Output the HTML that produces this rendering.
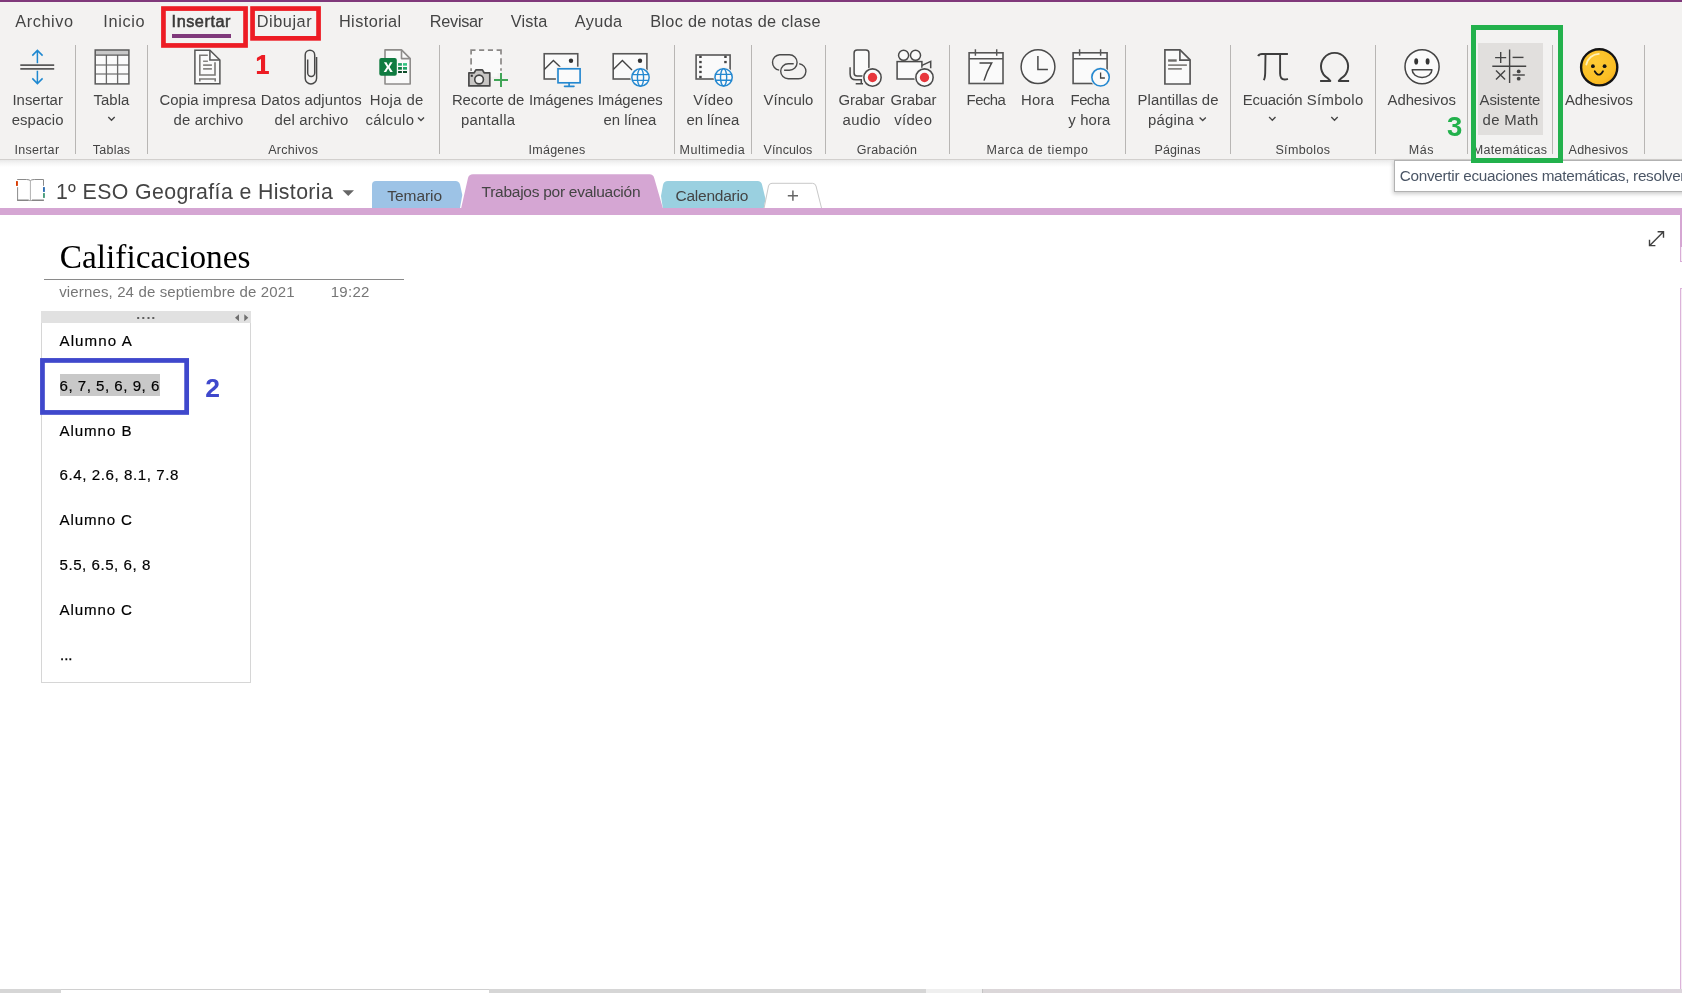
<!DOCTYPE html>
<html lang="es"><head><meta charset="utf-8"><title>OneNote</title>
<style>
html,body{margin:0;padding:0;}
body{width:1682px;height:993px;overflow:hidden;background:#fff;position:relative;font-family:"Liberation Sans",sans-serif;}
.a{position:absolute;}
.t{position:absolute;white-space:pre;}
.sep{position:absolute;top:45px;height:109px;width:1px;background:#b8b6b4;}
#ribbon{left:0;top:0;width:1682px;height:159px;background:#f3f2f1;border-bottom:1px solid #d2d0ce;}
#shadow{left:0;top:160px;width:1682px;height:7px;background:linear-gradient(#e9e9e9,#f6f6f6 50%,#ffffff);}
#topbar{left:0;top:0;width:1682px;height:2px;background:#80397b;}
</style></head><body>
<div class="a" id="ribbon"></div>
<div class="a" id="shadow"></div>
<div class="a" id="topbar"></div>

<!-- highlighted button -->
<div class="a" style="left:1478px;top:43px;width:65px;height:92px;background:#e1dfdd;"></div>

<!-- separators -->
<div class="sep" style="left:75px"></div><div class="sep" style="left:147px"></div>
<div class="sep" style="left:439px"></div><div class="sep" style="left:674px"></div>
<div class="sep" style="left:751px"></div><div class="sep" style="left:825px"></div>
<div class="sep" style="left:949px"></div><div class="sep" style="left:1125px"></div>
<div class="sep" style="left:1230px"></div><div class="sep" style="left:1375px"></div>
<div class="sep" style="left:1467px"></div><div class="sep" style="left:1552px"></div>
<div class="sep" style="left:1644px"></div>

<!-- active tab underline -->
<div class="a" style="left:172px;top:34px;width:59px;height:4px;background:#80397b;"></div>

<!-- notebook row / section tabs / pink bar -->
<svg class="a" style="left:0;top:165px" width="1682" height="60" viewBox="0 165 1682 60">
  <!-- Temario -->
  <path d="M372 208 V185 Q372 181 376 181 H455.5 Q459 181 460 184.5 L462.3 195 L460 208 Z" fill="#9dc3e6"/>
  <!-- Calendario -->
  <path d="M662.8 208 L661 196 L663 185 Q663.8 181 668 181 H757.5 Q761.2 181 762 184.5 L765.5 199 L763.8 208 Z" fill="#9ad0e0"/>
  <!-- Trabajos -->
  <path d="M461.2 208 L468 178 Q469 174.3 473 174.3 H649.5 Q653.2 174.3 654.2 178 L662.8 208 Z" fill="#d5a6d3"/>
  <!-- plus tab -->
  <path d="M764.1 208 L768.5 186 Q769.1 183.3 772 183.3 H812.5 Q815.2 183.3 816 186 L821.5 208" fill="#fff" stroke="#c8c8c8" stroke-width="1"/>
  <path d="M787.8 195.7 H798 M792.9 190.6 V200.8" stroke="#666" stroke-width="1.5" fill="none"/>
  <!-- pink bar -->
  <rect x="0" y="208" width="1682" height="7" fill="#d5a6d3"/>
  <!-- right strip -->
  <!-- dropdown triangle -->
  <path d="M342.5 190.2 H354 L348.25 196 Z" fill="#666"/>
  <!-- notebook icon -->
  <g fill="none" stroke="#8a8a8a" stroke-width="1">
    <path d="M17.2 179.5 H26.5 Q29.6 179.6 30.4 180.7 Q31.2 179.6 34.3 179.5 H43.5 V185.8"/>
    <path d="M17.6 187.2 V200"/>
    <path d="M30.4 180.7 V200" stroke="#b0b0b0"/>
  </g>
  <path d="M17.1 200.3 H28.8 M32 200.3 H43.9" stroke="#858585" stroke-width="1.6" fill="none"/><path d="M28.8 200.5 H32" stroke="#a8a8a8" stroke-width="1.1" fill="none"/>
  <rect x="16" y="181.1" width="1.9" height="4.8" fill="#d83b01"/>
  <rect x="43" y="187.1" width="1.9" height="4.8" fill="#2e6db4"/>
  <rect x="43" y="193.1" width="1.9" height="4.8" fill="#4a9c7a"/>
</svg>

<!-- right edge elements -->
<div class="a" style="left:1680px;top:215px;width:2px;height:32px;background:#d5a6d3;"></div>
<div class="a" style="left:1680px;top:247px;width:2px;height:15px;background:#f6ecf5;border-left:1px solid #d9acd7;border-bottom:1px solid #d9acd7;box-sizing:border-box;"></div>
<div class="a" style="left:1680px;top:288px;width:2px;height:701px;background:#f6ecf5;border-left:1px solid #dcb3da;border-top:1px solid #dcb3da;box-sizing:border-box;"></div>
<!-- expand arrow -->
<svg class="a" style="left:1645px;top:227px" width="24" height="24" viewBox="1645 227 24 24">
  <path d="M1649.8 245.5 L1663.2 232.1 M1657.6 231.8 H1663.5 V237.8 M1649.5 239.8 V245.6 H1655.4" fill="none" stroke="#404040" stroke-width="1.4"/>
</svg>

<!-- page: title underline -->
<div class="a" style="left:44px;top:279px;width:360px;height:1px;background:#8a8a8a;"></div>
<!-- container -->
<div class="a" style="left:41px;top:311px;width:210px;height:372px;box-sizing:border-box;border:1px solid #d6d6d6;"></div>
<div class="a" style="left:41px;top:311px;width:210px;height:12px;background:#e1e1e1;"></div>
<svg class="a" style="left:130px;top:311px" width="125" height="12" viewBox="130 311 125 12">
  <g fill="#5e5e5e"><rect x="137.2" y="317" width="2" height="2"/><rect x="142.3" y="317" width="2" height="2"/><rect x="147.5" y="317" width="2" height="2"/><rect x="152.3" y="317" width="2" height="2"/></g>
  <path d="M239 314.2 V321.2 L235 317.7 Z M244.3 314.2 V321.2 L248.3 317.7 Z" fill="#6e6e6e"/>
</svg>
<!-- selection highlight -->
<div class="a" style="left:60px;top:374px;width:100px;height:22px;background:#c8c8c8;"></div>

<!-- tooltip -->
<div class="a" style="left:1394px;top:160px;width:300px;height:32px;box-sizing:border-box;border:1px solid #b2b2b2;background:#fff;box-shadow:-1px 2px 4px rgba(0,0,0,0.2);"></div>
<!-- ICONS -->
<svg class="a" style="left:0;top:40px" width="1682" height="90" viewBox="0 40 1682 90">
<defs>
  <radialGradient id="yg" cx="0.4" cy="0.35" r="0.75">
    <stop offset="0" stop-color="#fdca35"/><stop offset="0.7" stop-color="#fbbf24"/><stop offset="1" stop-color="#f5a91a"/>
  </radialGradient>
</defs>

<!-- Insertar espacio -->
<g fill="none" stroke="#1e88d0" stroke-width="1.5">
  <path d="M37.4 63.3 V50.3 M32.3 55.6 L37.4 50.4 L42.6 55.6"/>
  <path d="M37.4 70.7 V83.8 M32.3 78.4 L37.4 83.6 L42.6 78.4"/>
</g>
<path d="M20.3 65.1 H54.2 M20.3 68.9 H54.2" stroke="#5a5a5a" stroke-width="1.6" fill="none"/>

<!-- Tabla -->
<g>
  <rect x="95.2" y="50" width="33.7" height="33.9" fill="#fbfbfb"/>
  <rect x="95.2" y="50" width="33.7" height="5" fill="#c8c8c8"/>
  <path d="M95.2 65 H128.9 M95.2 74 H128.9" stroke="#8a8a8a" stroke-width="1.3" fill="none"/>
  <path d="M106.4 55 V83.9 M117.6 55 V83.9" stroke="#6a6a6a" stroke-width="1.3" fill="none"/>
  <path d="M95.2 55.1 H128.9" stroke="#5a5a5a" stroke-width="1.4" fill="none"/>
  <rect x="95.2" y="50" width="33.7" height="33.9" fill="none" stroke="#5a5a5a" stroke-width="1.5"/>
</g>

<!-- Copia impresa -->
<g fill="none" stroke="#555" stroke-width="1.5">
  <path d="M194.9 50.3 H209.9 L219.9 60 V83.8 H194.9 Z" fill="#fafafa"/>
  <path d="M209.9 50.3 V60 H219.9"/>
  <path d="M207.8 55.2 H199.8 V75 H215 V62.2" stroke="#7a7876" stroke-width="1.6"/>
  <path d="M203.1 61.3 H207.9 M203.1 65.1 H211.9 M203.1 68.9 H211.9" stroke="#878583" stroke-width="1.6"/>
  <path d="M199.8 81.5 V79 H215.2 V81.5" stroke="#7a7876" stroke-width="1.6"/>
</g>

<!-- Paperclip -->
<path d="M316.6 57 V78.3 A5.7 5.7 0 0 1 305.2 78.3 V54.9 A4.75 4.75 0 0 1 314.7 54.9 V72.9 A3.5 3.5 0 0 1 307.7 72.9 V59.4" fill="none" stroke="#484848" stroke-width="1.45"/>

<!-- Excel -->
<g>
  <path d="M385 49.9 H401.5 L410.2 58.6 V84 H385 Z" fill="#fafafa" stroke="#8e8c8a" stroke-width="1.6" stroke-linejoin="round"/>
  <path d="M401.5 49.9 V58.6 H410.2" fill="none" stroke="#8e8c8a" stroke-width="1.6" stroke-linejoin="round"/>
  <rect x="398.1" y="63.1" width="3.8" height="2.6" fill="#21a366"/><rect x="403" y="63.1" width="4" height="2.6" fill="#33c481"/>
  <rect x="398.1" y="67" width="3.8" height="2.7" fill="#107c41"/><rect x="403" y="67" width="4" height="2.7" fill="#21a366"/>
  <rect x="398.1" y="71" width="3.8" height="2" fill="#0b4a28"/><rect x="403" y="71" width="4" height="2" fill="#0e4f2b"/>
  <rect x="379.3" y="58" width="17.5" height="17.7" rx="2" fill="#107c41"/>
  <path d="M383.9 62.3 H386.5 L388.3 65.7 L390.1 62.3 H392.6 L389.6 67.1 L392.8 71.9 H390.2 L388.2 68.4 L386.2 71.9 H383.7 L386.9 67.1 Z" fill="#fff"/>
</g>

<!-- Recorte de pantalla -->
<g>
  <path d="M471.1 50.1 H501 V73 H497.5 V76.7 H471.1 Z" fill="#fafafa"/>
  <path d="M471.1 54.4 V50.1 H475.5 M479.1 50.1 H484.2 M487.9 50.1 H493 M496.6 50.1 H501 V54.4 M471.1 58.2 V64.4 M471.1 68.2 V71 M501 58.2 V64.4 M501 68.2 V70.8" fill="none" stroke="#8a8886" stroke-width="1.7"/>
  <path d="M468.9 72.8 H474.2 L475.9 69.9 H482.4 L484.1 72.8 H489.8 V85.9 H468.9 Z" fill="#c8c6c4" stroke="#484848" stroke-width="1.7" stroke-linejoin="round"/>
  <circle cx="479.1" cy="79.5" r="4.35" fill="#f3f2f1" stroke="#444" stroke-width="1.6"/>
  <rect x="470.7" y="74.7" width="2.1" height="2.1" fill="#333"/>
  <path d="M494 79.9 H508 M501 73 V86.9" stroke="#40a557" stroke-width="2" fill="none"/>
</g>

<!-- Imágenes -->
<g fill="none" stroke="#585858" stroke-width="1.6">
  <rect x="544.2" y="53.75" width="33.55" height="25.25" fill="#fafafa"/>
  <path d="M544.3 69.6 L553.4 60.5 L560.2 67" stroke="#444" stroke-width="1.4"/>
  <circle cx="571" cy="60.7" r="2.2" fill="#333" stroke="none"/>
  <rect x="555.9" y="66.7" width="26.3" height="18.3" fill="#f3f2f1" stroke="none"/>
  <rect x="558" y="68.8" width="22.1" height="14" fill="#fafafa" stroke="#2488d0" stroke-width="1.65"/>
  <path d="M569.1 82.9 V86.2 M564.5 86.3 H574" stroke="#2488d0" stroke-width="1.65" stroke-linecap="round"/>
</g>

<!-- Imágenes en línea -->
<g fill="none" stroke="#585858" stroke-width="1.6">
  <rect x="613.2" y="53.75" width="33.7" height="25.25" fill="#fafafa"/>
  <path d="M613.3 69.6 L622.4 60.5 L632 70" stroke="#444" stroke-width="1.4"/>
  <circle cx="640" cy="60.8" r="2.2" fill="#333" stroke="none"/>
</g>
<g fill="none" stroke="#2488d0" stroke-width="1.5" transform="translate(640.5,77.5)"><circle cx="0" cy="0" r="10.2" fill="#f3f2f1" stroke="none"/><circle cx="0" cy="0" r="8.65" fill="#fafafa"/><ellipse cx="0" cy="0" rx="3.1" ry="8.65" stroke-width="1.4"/><path d="M-8.1 -2.9 H8.1 M-8.1 2.9 H8.1" stroke-width="1.4"/></g>

<!-- Vídeo en línea -->
<g>
  <rect x="696.1" y="55" width="34" height="24" fill="#fafafa" stroke="#585858" stroke-width="1.6"/>
  <g fill="#444">
    <rect x="699.2" y="55.7" width="2.5" height="2.3"/><rect x="699.2" y="60.9" width="2.5" height="2.3"/><rect x="699.2" y="65.8" width="2.5" height="2.3"/><rect x="699.2" y="70.8" width="2.5" height="2.3"/><rect x="699.2" y="75.8" width="2.5" height="2.3"/>
    <rect x="724.2" y="55.7" width="2.5" height="2.3"/><rect x="724.2" y="60.9" width="2.5" height="2.3"/>
  </g>
</g>
<g fill="none" stroke="#2488d0" stroke-width="1.5" transform="translate(723.6,77.3)"><circle cx="0" cy="0" r="10.2" fill="#f3f2f1" stroke="none"/><circle cx="0" cy="0" r="8.65" fill="#fafafa"/><ellipse cx="0" cy="0" rx="3.1" ry="8.65" stroke-width="1.4"/><path d="M-8.1 -2.9 H8.1 M-8.1 2.9 H8.1" stroke-width="1.4"/></g>

<!-- Vínculo -->
<g fill="none" stroke="#4a4a4a" stroke-width="1.4">
  <path d="M779.2 70.1 A7.75 7.75 0 0 1 779.65 54.7 H789.35 A7.75 7.75 0 0 1 789.35 70.2 H784.1"/>
  <path d="M793.7 63.7 H788.25 A7.55 7.55 0 0 0 788.25 78.8 H798.55 A7.55 7.55 0 0 0 799.2 63.75"/>
</g>

<!-- Grabar audio -->
<g fill="none" stroke="#4a4a4a" stroke-width="1.5">
  <rect x="854.1" y="49.9" width="14.8" height="26.2" rx="3" fill="#fafafa"/>
  <path d="M850.1 67.2 V74 Q850.1 79.8 856 79.8 H861.3 V83.8 M855.7 83.8 H863"/>
</g>
<g transform="translate(872.5,77.5)"><circle cx="0" cy="0" r="10.3" fill="#f3f2f1"/><circle cx="0" cy="0" r="8.65" fill="#fafafa" stroke="#4a4a4a" stroke-width="1.55"/><circle cx="0" cy="0" r="4.65" fill="#e8363c"/></g>

<!-- Grabar vídeo -->
<g fill="#fafafa" stroke="#4a4a4a" stroke-width="1.5">
  <path d="M922 65.4 L930.7 61.4 V68.2" fill="none"/>
  <rect x="897.1" y="61.6" width="24.8" height="17.4"/>
  <circle cx="903.6" cy="55.3" r="5.05"/>
  <circle cx="915.5" cy="55.3" r="5.05"/>
</g>
<g transform="translate(924.5,77.5)"><circle cx="0" cy="0" r="10.3" fill="#f3f2f1"/><circle cx="0" cy="0" r="8.65" fill="#fafafa" stroke="#4a4a4a" stroke-width="1.55"/><circle cx="0" cy="0" r="4.65" fill="#e8363c"/></g>

<!-- Fecha -->
<g fill="none" stroke="#555" stroke-width="1.6">
  <rect x="969.1" y="52.8" width="33.9" height="30.7" fill="#fafafa"/>
  <path d="M969.1 58.8 H1003 M975.4 49.3 V55.8 M996.7 49.3 V55.8" stroke-width="1.45"/>
  <path d="M979.5 62.9 H991.7 Q987 71 984 80.6" stroke="#444" stroke-width="1.5"/>
</g>

<!-- Hora -->
<g fill="none" stroke="#4a4a4a" stroke-width="1.5">
  <circle cx="1038" cy="66.7" r="16.9" fill="#fafafa"/>
  <path d="M1037.9 56.1 V69.5 H1047.9"/>
</g>

<!-- Fecha y hora -->
<g fill="none" stroke="#555" stroke-width="1.6">
  <rect x="1073.1" y="52.8" width="34" height="30.7" fill="#fafafa"/>
  <path d="M1073.1 58.8 H1107.1 M1079.6 49.3 V55.8 M1100.6 49.3 V55.8" stroke-width="1.45"/>
  <circle cx="1100.55" cy="77.3" r="10.4" fill="#f3f2f1" stroke="none"/>
  <circle cx="1100.55" cy="77.3" r="8.7" fill="#fafafa" stroke="#2488d0" stroke-width="1.6"/>
  <path d="M1100.6 72.6 V78 H1104.9" stroke="#444" stroke-width="1.3"/>
</g>

<!-- Plantillas de página -->
<g fill="none" stroke="#555" stroke-width="1.65">
  <path d="M1164.9 49.9 H1180 L1190.1 59.9 V83.95 H1164.9 Z" fill="#fafafa"/>
  <path d="M1179.9 49.9 V60.1 H1190.1"/>
  <path d="M1168.1 60.5 H1176.7" stroke="#6f6d6a" stroke-width="2.4"/>
  <path d="M1168.1 65.05 H1186.9 M1168.1 68.9 H1181.8" stroke="#858380" stroke-width="1.7"/>
</g>

<!-- pi -->
<g fill="none" stroke="#3d3d3d" stroke-width="2">
  <path d="M1258.2 56.2 Q1259 54.1 1262 54.1 H1287.9"/>
  <path d="M1265.5 54.1 L1265.2 73 Q1265 78.5 1263.7 80.2" stroke-width="1.9"/>
  <path d="M1280.1 54.1 V73.5 Q1280.1 79.3 1284.6 79.5 Q1286.4 79.5 1287.9 78.9" stroke-width="1.9"/>
</g>

<!-- Omega -->
<path d="M1320.1 81 H1330.3 L1328 78.3 A13.55 13.55 0 1 1 1341.1 78.3 L1338.8 81 H1349.1" fill="none" stroke="#3d3d3d" stroke-width="1.95" stroke-linejoin="round"/>

<!-- Smiley -->
<g fill="#fafafa" stroke="#444" stroke-width="1.5">
  <circle cx="1422.05" cy="66.7" r="17.05"/>
  <path d="M1412.2 69.7 H1431.9 A9.85 7.9 0 0 1 1412.2 69.7 Z" stroke-linejoin="round"/>
  <ellipse cx="1416.2" cy="61.4" rx="1.95" ry="3.1" fill="#333" stroke="none"/>
  <ellipse cx="1427.6" cy="61.4" rx="1.95" ry="3.1" fill="#333" stroke="none"/>
</g>

<!-- Math assistant -->
<g fill="none" stroke="#444" stroke-width="1.4">
  <path d="M1509.6 49.4 V83.1 M1492.3 66.2 H1526.2"/>
  <path d="M1495.1 57.6 H1506.2 M1500.7 52.1 V63"/>
  <path d="M1512.6 57.4 H1523.5"/>
  <path d="M1496 70.5 L1505.1 79.6 M1505.1 70.5 L1496 79.6"/>
  <path d="M1512.6 75 H1524.8"/>
  <circle cx="1518.7" cy="71.4" r="1.9" fill="#444" stroke="none"/>
  <circle cx="1518.7" cy="78.7" r="1.9" fill="#444" stroke="none"/>
</g>

<!-- yellow smiley -->
<g>
  <circle cx="1599.2" cy="67.3" r="18.1" fill="url(#yg)" stroke="#141414" stroke-width="2.4"/>
  <path d="M1586.3 64.5 A13.5 13.5 0 0 1 1598.8 53.8" fill="none" stroke="#fff1b8" stroke-width="1.8" stroke-linecap="round"/>
  <circle cx="1592.9" cy="66.2" r="1.9" fill="#141414"/>
  <circle cx="1604.6" cy="66.2" r="1.9" fill="#141414"/>
  <path d="M1594.7 71.2 Q1598.9 78.3 1603 71.2" fill="none" stroke="#141414" stroke-width="1.7" stroke-linecap="round"/>
</g>

<!-- red 1 -->
<path d="M261.9 55 H265.1 V71 H268.9 V74 H256.9 V71 H261 V58.9 L257.7 60.9 Q256.9 61.3 256.9 60.4 V58.5 Q256.9 57.9 257.4 57.6 Z" fill="#ed1c24"/>

<!-- chevrons -->
<g fill="none" stroke="#444" stroke-width="1.35">
  <path d="M108.3 117 L111.5 120.2 L114.7 117"/>
  <path d="M418 117.5 L421 120.5 L424 117.5"/>
  <path d="M1199.6 117.5 L1202.7 120.6 L1205.8 117.5"/>
  <path d="M1269.1 117 L1272.3 120.2 L1275.5 117"/>
  <path d="M1331.3 117 L1334.5 120.2 L1337.7 117"/>
</g>
</svg>


<div id="txt" style="position:absolute;left:0;top:0;width:1682px;height:993px;will-change:transform;">
<span class="t" style="left:15.3px;top:11.4px;font:400 16.3px/21px 'Liberation Sans', sans-serif;color:#444444;letter-spacing:0.56px">Archivo</span>
<span class="t" style="left:103.2px;top:11.4px;font:400 16.3px/21px 'Liberation Sans', sans-serif;color:#444444;letter-spacing:0.68px">Inicio</span>
<span class="t" style="left:171.6px;top:11.4px;font:400 16.3px/21px 'Liberation Sans', sans-serif;color:#3b3a39;letter-spacing:0.52px;-webkit-text-stroke:0.55px #3b3a39">Insertar</span>
<span class="t" style="left:256.7px;top:11.4px;font:400 16.3px/21px 'Liberation Sans', sans-serif;color:#444444;letter-spacing:0.56px">Dibujar</span>
<span class="t" style="left:338.9px;top:11.4px;font:400 16.3px/21px 'Liberation Sans', sans-serif;color:#444444;letter-spacing:0.43px">Historial</span>
<span class="t" style="left:429.8px;top:11.4px;font:400 16.3px/21px 'Liberation Sans', sans-serif;color:#444444;letter-spacing:-0.29px">Revisar</span>
<span class="t" style="left:510.8px;top:11.4px;font:400 16.3px/21px 'Liberation Sans', sans-serif;color:#444444;letter-spacing:0.14px">Vista</span>
<span class="t" style="left:574.7px;top:11.4px;font:400 16.3px/21px 'Liberation Sans', sans-serif;color:#444444;letter-spacing:0.40px">Ayuda</span>
<span class="t" style="left:650.2px;top:11.4px;font:400 16.3px/21px 'Liberation Sans', sans-serif;color:#444444;letter-spacing:0.31px">Bloc de notas de clase</span>
<span class="t" style="left:12.5px;top:90.7px;font:400 14.9px/19px 'Liberation Sans', sans-serif;color:#444444;letter-spacing:-0.02px">Insertar</span>
<span class="t" style="left:11.7px;top:110.5px;font:400 14.9px/19px 'Liberation Sans', sans-serif;color:#444444;letter-spacing:0.08px">espacio</span>
<span class="t" style="left:93.6px;top:90.7px;font:400 14.9px/19px 'Liberation Sans', sans-serif;color:#444444;letter-spacing:0.02px">Tabla</span>
<span class="t" style="left:159.5px;top:90.7px;font:400 14.9px/19px 'Liberation Sans', sans-serif;color:#444444;letter-spacing:0.04px">Copia impresa</span>
<span class="t" style="left:173.6px;top:110.5px;font:400 14.9px/19px 'Liberation Sans', sans-serif;color:#444444;letter-spacing:0.12px">de archivo</span>
<span class="t" style="left:260.7px;top:90.7px;font:400 14.9px/19px 'Liberation Sans', sans-serif;color:#444444;letter-spacing:0.13px">Datos adjuntos</span>
<span class="t" style="left:274.6px;top:110.5px;font:400 14.9px/19px 'Liberation Sans', sans-serif;color:#444444;letter-spacing:0.16px">del archivo</span>
<span class="t" style="left:369.8px;top:90.7px;font:400 14.9px/19px 'Liberation Sans', sans-serif;color:#444444;letter-spacing:0.37px">Hoja de</span>
<span class="t" style="left:365.5px;top:110.5px;font:400 14.9px/19px 'Liberation Sans', sans-serif;color:#444444;letter-spacing:0.35px">cálculo</span>
<span class="t" style="left:451.9px;top:90.7px;font:400 14.9px/19px 'Liberation Sans', sans-serif;color:#444444;letter-spacing:-0.04px">Recorte de</span>
<span class="t" style="left:460.9px;top:110.5px;font:400 14.9px/19px 'Liberation Sans', sans-serif;color:#444444;letter-spacing:0.29px">pantalla</span>
<span class="t" style="left:528.9px;top:90.7px;font:400 14.9px/19px 'Liberation Sans', sans-serif;color:#444444;letter-spacing:-0.11px">Imágenes</span>
<span class="t" style="left:597.7px;top:90.7px;font:400 14.9px/19px 'Liberation Sans', sans-serif;color:#444444;letter-spacing:-0.05px">Imágenes</span>
<span class="t" style="left:603.6px;top:110.5px;font:400 14.9px/19px 'Liberation Sans', sans-serif;color:#444444;letter-spacing:-0.05px">en línea</span>
<span class="t" style="left:693.3px;top:90.7px;font:400 14.9px/19px 'Liberation Sans', sans-serif;color:#444444;letter-spacing:0.20px">Vídeo</span>
<span class="t" style="left:686.4px;top:110.5px;font:400 14.9px/19px 'Liberation Sans', sans-serif;color:#444444;letter-spacing:-0.03px">en línea</span>
<span class="t" style="left:763.5px;top:90.7px;font:400 14.9px/19px 'Liberation Sans', sans-serif;color:#444444;letter-spacing:0.03px">Vínculo</span>
<span class="t" style="left:838.5px;top:90.7px;font:400 14.9px/19px 'Liberation Sans', sans-serif;color:#444444;letter-spacing:-0.04px">Grabar</span>
<span class="t" style="left:842.5px;top:110.5px;font:400 14.9px/19px 'Liberation Sans', sans-serif;color:#444444;letter-spacing:0.43px">audio</span>
<span class="t" style="left:890.4px;top:90.7px;font:400 14.9px/19px 'Liberation Sans', sans-serif;color:#444444;letter-spacing:-0.04px">Grabar</span>
<span class="t" style="left:894.2px;top:110.5px;font:400 14.9px/19px 'Liberation Sans', sans-serif;color:#444444;letter-spacing:0.35px">vídeo</span>
<span class="t" style="left:966.6px;top:90.7px;font:400 14.9px/19px 'Liberation Sans', sans-serif;color:#444444;letter-spacing:-0.54px">Fecha</span>
<span class="t" style="left:1020.9px;top:90.7px;font:400 14.9px/19px 'Liberation Sans', sans-serif;color:#444444;letter-spacing:0.30px">Hora</span>
<span class="t" style="left:1070.6px;top:90.7px;font:400 14.9px/19px 'Liberation Sans', sans-serif;color:#444444;letter-spacing:-0.56px">Fecha</span>
<span class="t" style="left:1068.3px;top:110.5px;font:400 14.9px/19px 'Liberation Sans', sans-serif;color:#444444;letter-spacing:0.13px">y hora</span>
<span class="t" style="left:1137.6px;top:90.7px;font:400 14.9px/19px 'Liberation Sans', sans-serif;color:#444444;letter-spacing:0.05px">Plantillas de</span>
<span class="t" style="left:1148.0px;top:110.5px;font:400 14.9px/19px 'Liberation Sans', sans-serif;color:#444444;letter-spacing:0.23px">página</span>
<span class="t" style="left:1242.7px;top:90.7px;font:400 14.9px/19px 'Liberation Sans', sans-serif;color:#444444;letter-spacing:-0.20px">Ecuación</span>
<span class="t" style="left:1306.8px;top:90.7px;font:400 14.9px/19px 'Liberation Sans', sans-serif;color:#444444;letter-spacing:0.29px">Símbolo</span>
<span class="t" style="left:1387.5px;top:90.7px;font:400 14.9px/19px 'Liberation Sans', sans-serif;color:#444444;letter-spacing:-0.04px">Adhesivos</span>
<span class="t" style="left:1479.5px;top:90.7px;font:400 14.9px/19px 'Liberation Sans', sans-serif;color:#444444;letter-spacing:-0.05px">Asistente</span>
<span class="t" style="left:1482.6px;top:110.5px;font:400 14.9px/19px 'Liberation Sans', sans-serif;color:#444444;letter-spacing:0.30px">de Math</span>
<span class="t" style="left:1564.9px;top:90.7px;font:400 14.9px/19px 'Liberation Sans', sans-serif;color:#444444;letter-spacing:-0.09px">Adhesivos</span>
<span class="t" style="left:14.5px;top:141.7px;font:400 12.5px/16px 'Liberation Sans', sans-serif;color:#444444;letter-spacing:0.31px">Insertar</span>
<span class="t" style="left:92.8px;top:141.7px;font:400 12.5px/16px 'Liberation Sans', sans-serif;color:#444444;letter-spacing:0.23px">Tablas</span>
<span class="t" style="left:268.2px;top:141.7px;font:400 12.5px/16px 'Liberation Sans', sans-serif;color:#444444;letter-spacing:0.28px">Archivos</span>
<span class="t" style="left:528.6px;top:141.7px;font:400 12.5px/16px 'Liberation Sans', sans-serif;color:#444444;letter-spacing:0.24px">Imágenes</span>
<span class="t" style="left:679.5px;top:141.7px;font:400 12.5px/16px 'Liberation Sans', sans-serif;color:#444444;letter-spacing:0.54px">Multimedia</span>
<span class="t" style="left:763.5px;top:141.7px;font:400 12.5px/16px 'Liberation Sans', sans-serif;color:#444444;letter-spacing:0.13px">Vínculos</span>
<span class="t" style="left:856.8px;top:141.7px;font:400 12.5px/16px 'Liberation Sans', sans-serif;color:#444444;letter-spacing:0.32px">Grabación</span>
<span class="t" style="left:986.4px;top:141.7px;font:400 12.5px/16px 'Liberation Sans', sans-serif;color:#444444;letter-spacing:0.61px">Marca de tiempo</span>
<span class="t" style="left:1154.5px;top:141.7px;font:400 12.5px/16px 'Liberation Sans', sans-serif;color:#444444;letter-spacing:0.12px">Páginas</span>
<span class="t" style="left:1275.4px;top:141.7px;font:400 12.5px/16px 'Liberation Sans', sans-serif;color:#444444;letter-spacing:0.36px">Símbolos</span>
<span class="t" style="left:1408.7px;top:141.7px;font:400 12.5px/16px 'Liberation Sans', sans-serif;color:#444444;letter-spacing:0.66px">Más</span>
<span class="t" style="left:1472.7px;top:141.7px;font:400 12.5px/16px 'Liberation Sans', sans-serif;color:#444444;letter-spacing:0.35px">Matemáticas</span>
<span class="t" style="left:1568.6px;top:141.7px;font:400 12.5px/16px 'Liberation Sans', sans-serif;color:#444444;letter-spacing:0.22px">Adhesivos</span>
<span class="t" style="left:1447.1px;top:108.9px;font:700 27.5px/36px 'Liberation Sans', sans-serif;color:#22b14c;letter-spacing:-0.50px">3</span>
<span class="t" style="left:205.2px;top:371.2px;font:700 26.5px/34px 'Liberation Sans', sans-serif;color:#3f48cc;letter-spacing:-0.15px">2</span>
<span class="t" style="left:1399.8px;top:166.3px;font:400 15.3px/20px 'Liberation Sans', sans-serif;color:#4a5565;letter-spacing:-0.29px">Convertir ecuaciones matemáticas, resolver</span>
<span class="t" style="left:55.9px;top:177.5px;font:400 21.3px/28px 'Liberation Sans', sans-serif;color:#444444;letter-spacing:0.38px">1º ESO Geografía e Historia</span>
<span class="t" style="left:387.3px;top:186.0px;font:400 15.5px/20px 'Liberation Sans', sans-serif;color:#444444;letter-spacing:-0.05px">Temario</span>
<span class="t" style="left:481.6px;top:182.3px;font:400 15.5px/20px 'Liberation Sans', sans-serif;color:#444444;letter-spacing:-0.27px">Trabajos por evaluación</span>
<span class="t" style="left:675.5px;top:186.0px;font:400 15.5px/20px 'Liberation Sans', sans-serif;color:#444444;letter-spacing:-0.24px">Calendario</span>
<span class="t" style="left:59.8px;top:235.0px;font:400 33.3px/43px 'Liberation Serif', serif;color:#000;letter-spacing:0.02px">Calificaciones</span>
<span class="t" style="left:59.2px;top:281.8px;font:400 15px/20px 'Liberation Sans', sans-serif;color:#767676;letter-spacing:0.14px">viernes, 24 de septiembre de 2021</span>
<span class="t" style="left:330.7px;top:281.8px;font:400 15px/20px 'Liberation Sans', sans-serif;color:#767676;letter-spacing:0.29px">19:22</span>
<span class="t" style="left:59.5px;top:331.0px;font:400 15.1px/20px 'Liberation Sans', sans-serif;color:#000;letter-spacing:1.09px;-webkit-text-stroke:0.18px #000">Alumno A</span>
<span class="t" style="left:59.5px;top:375.8px;font:400 15.1px/20px 'Liberation Sans', sans-serif;color:#000;letter-spacing:0.50px;-webkit-text-stroke:0.18px #000">6, 7, 5, 6, 9, 6</span>
<span class="t" style="left:59.5px;top:420.9px;font:400 15.1px/20px 'Liberation Sans', sans-serif;color:#000;letter-spacing:0.93px;-webkit-text-stroke:0.18px #000">Alumno B</span>
<span class="t" style="left:59.5px;top:465.2px;font:400 15.1px/20px 'Liberation Sans', sans-serif;color:#000;letter-spacing:0.58px;-webkit-text-stroke:0.18px #000">6.4, 2.6, 8.1, 7.8</span>
<span class="t" style="left:59.5px;top:510.0px;font:400 15.1px/20px 'Liberation Sans', sans-serif;color:#000;letter-spacing:0.88px;-webkit-text-stroke:0.18px #000">Alumno C</span>
<span class="t" style="left:59.5px;top:554.7px;font:400 15.1px/20px 'Liberation Sans', sans-serif;color:#000;letter-spacing:0.53px;-webkit-text-stroke:0.18px #000">5.5, 6.5, 6, 8</span>
<span class="t" style="left:59.5px;top:599.8px;font:400 15.1px/20px 'Liberation Sans', sans-serif;color:#000;letter-spacing:0.88px;-webkit-text-stroke:0.18px #000">Alumno C</span>
<span class="t" style="left:60.0px;top:645.3px;font:400 15.1px/20px 'Liberation Sans', sans-serif;color:#000;letter-spacing:-0.06px;-webkit-text-stroke:0.3px #000">...</span>
</div>

<!-- annotation boxes -->
<svg class="a" style="left:0;top:0" width="1682" height="420" viewBox="0 0 1682 420" fill="none">
  <rect x="163.45" y="8.55" width="82.1" height="36.9" stroke="#ed1c24" stroke-width="4.7"/>
  <rect x="252.55" y="8.55" width="66" height="29.8" stroke="#ed1c24" stroke-width="4.7"/>
  <rect x="1473.5" y="27.5" width="87" height="133" stroke="#22b14c" stroke-width="5"/>
  <rect x="42.45" y="360.45" width="144.2" height="52" stroke="#3f48cc" stroke-width="4.75"/>
</svg>

<!-- bottom strip -->
<div class="a" style="left:0;top:989px;width:1682px;height:4px;background:#d6d6d6;"></div>
<div class="a" style="left:61px;top:989px;width:428px;height:4px;background:#fff;border-top:1px solid #d0d0d0;box-sizing:border-box"></div>
<div class="a" style="left:926px;top:989px;width:57px;height:4px;background:#efefef;"></div>
<div class="a" style="left:983px;top:989px;width:699px;height:4px;background:linear-gradient(90deg,#dbd7d9 0%,#ddd4d8 35%,#d0d8de 70%,#d4d8de 85%,#dcd5dc 100%);"></div>
<div class="a" style="left:982px;top:989px;width:1px;height:4px;background:#c4c4c4;"></div>
</body></html>
